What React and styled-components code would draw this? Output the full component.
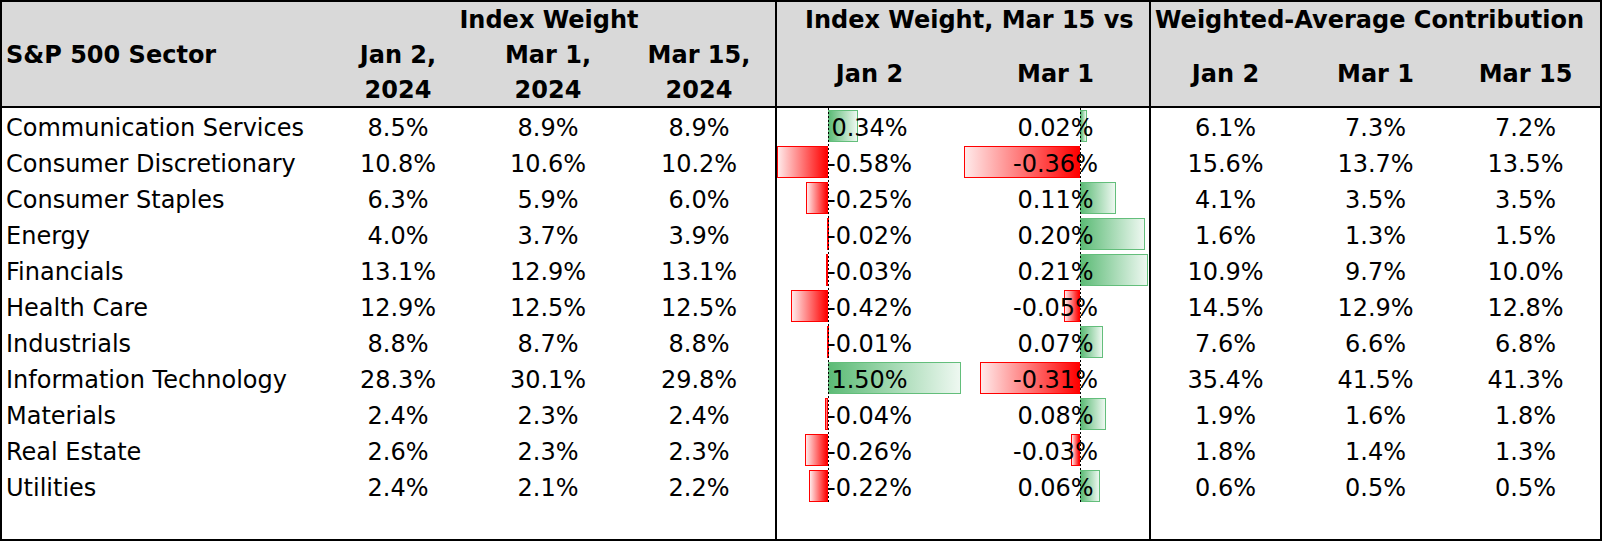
import React from "react"
import styled, { createGlobalStyle } from "styled-components"

const COLS = "321px 150px 150px 152px 187px 187px 151px 151px 149px"

const rows = [
  ["Communication Services", "8.5%", "8.9%", "8.9%", 0.34, 0.02, "6.1%", "7.3%", "7.2%"],
  ["Consumer Discretionary", "10.8%", "10.6%", "10.2%", -0.58, -0.36, "15.6%", "13.7%", "13.5%"],
  ["Consumer Staples", "6.3%", "5.9%", "6.0%", -0.25, 0.11, "4.1%", "3.5%", "3.5%"],
  ["Energy", "4.0%", "3.7%", "3.9%", -0.02, 0.2, "1.6%", "1.3%", "1.5%"],
  ["Financials", "13.1%", "12.9%", "13.1%", -0.03, 0.21, "10.9%", "9.7%", "10.0%"],
  ["Health Care", "12.9%", "12.5%", "12.5%", -0.42, -0.05, "14.5%", "12.9%", "12.8%"],
  ["Industrials", "8.8%", "8.7%", "8.8%", -0.01, 0.07, "7.6%", "6.6%", "6.8%"],
  ["Information Technology", "28.3%", "30.1%", "29.8%", 1.5, -0.31, "35.4%", "41.5%", "41.3%"],
  ["Materials", "2.4%", "2.3%", "2.4%", -0.04, 0.08, "1.9%", "1.6%", "1.8%"],
  ["Real Estate", "2.6%", "2.3%", "2.3%", -0.26, -0.03, "1.8%", "1.4%", "1.3%"],
  ["Utilities", "2.4%", "2.1%", "2.2%", -0.22, 0.06, "0.6%", "0.5%", "0.5%"],
]

// data bar scales: bar area is 184px wide inside the cell
const scales = [
  { min: -0.58, max: 1.5, offset: 0 },
  { min: -0.36, max: 0.21, offset: 2 },
]
const BAR_W = 184

const GlobalStyle = createGlobalStyle`
  body {
    margin: 0;
    background: #fff;
    font-family: "DejaVu Sans", sans-serif;
    color: #000;
  }
`

const Frame = styled.div`
  width: 1602px;
  height: 541px;
  box-sizing: border-box;
  border: 2px solid #000;
  display: flex;
  flex-direction: column;
  font-size: 24px;
`

const Head = styled.div`
  display: grid;
  grid-template-columns: ${COLS};
  grid-template-rows: 35px 36px 33px;
  background: #d9d9d9;
  border-bottom: 2px solid #000;
  font-weight: bold;
`

const HeadCell = styled.div`
  grid-column: ${(p) => p.$col};
  grid-row: ${(p) => p.$row};
  display: flex;
  align-items: center;
  justify-content: ${(p) => p.$align || "center"};
  padding-left: ${(p) => p.$pad || 0}px;
  padding-top: ${(p) => p.$top || 0}px;
  border-left: ${(p) => (p.$divider ? "2px solid #000" : "none")};
  white-space: nowrap;
`

const Row = styled.div`
  display: grid;
  grid-template-columns: ${COLS};
  height: ${(p) => p.$h || 36}px;
  flex: ${(p) => (p.$fill ? 1 : "none")};
`

const Cell = styled.div`
  display: flex;
  align-items: center;
  justify-content: ${(p) => p.$align || "center"};
  padding-left: ${(p) => p.$pad || 0}px;
  padding-top: 3px;
  box-sizing: border-box;
  border-left: ${(p) => (p.$divider ? "2px solid #000" : "none")};
  white-space: nowrap;
`

const BarCell = styled(Cell)`
  position: relative;
`

const Bar = styled.div`
  position: absolute;
  top: 2px;
  height: 32px;
  box-sizing: border-box;
  border: 1px solid ${(p) => (p.$neg ? "#ff0000" : "#63be7b")};
  background: ${(p) =>
    p.$neg
      ? "linear-gradient(to right, #ffeaea, #ff0000)"
      : "linear-gradient(to right, #5cbb76, #eef8f1)"};
`

const Axis = styled.div`
  position: absolute;
  top: 0;
  bottom: 0;
  width: 1px;
  background: repeating-linear-gradient(to bottom, #000 0 2px, transparent 2px 4px);
  z-index: 1;
`

const Value = styled.span`
  position: relative;
  z-index: 2;
`

function DataBar({ value, scale, divider }) {
  const per = BAR_W / (scale.max - scale.min)
  const axis = scale.offset + -scale.min * per
  const w = Math.abs(value) * per
  const left = value < 0 ? axis - w : axis
  return (
    <BarCell $divider={divider}>
      <Bar $neg={value < 0} style={{ left, width: Math.max(w, 1) }} />
      <Axis style={{ left: Math.round(axis) }} />
      <Value>{value.toFixed(2)}%</Value>
    </BarCell>
  )
}

export default function App() {
  return (
    <>
      <GlobalStyle />
      <Frame>
        <Head>
          <HeadCell $col="2 / 5" $row="1">Index Weight</HeadCell>
          <HeadCell $col="5 / 7" $row="1" $align="flex-start" $pad={28} $divider>
            Index Weight, Mar 15 vs
          </HeadCell>
          <HeadCell $col="7 / 10" $row="1" $align="flex-start" $pad={4} $divider>
            Weighted-Average Contribution
          </HeadCell>

          <HeadCell $col="1" $row="2" $align="flex-start" $pad={4}>S&amp;P 500 Sector</HeadCell>
          <HeadCell $col="2" $row="2">Jan 2,</HeadCell>
          <HeadCell $col="3" $row="2">Mar 1,</HeadCell>
          <HeadCell $col="4" $row="2">Mar 15,</HeadCell>
          <HeadCell $col="2" $row="3">2024</HeadCell>
          <HeadCell $col="3" $row="3">2024</HeadCell>
          <HeadCell $col="4" $row="3">2024</HeadCell>

          <HeadCell $col="5" $row="2 / 4" $top={4} $divider>Jan 2</HeadCell>
          <HeadCell $col="6" $row="2 / 4" $top={4}>Mar 1</HeadCell>
          <HeadCell $col="7" $row="2 / 4" $top={4} $divider>Jan 2</HeadCell>
          <HeadCell $col="8" $row="2 / 4" $top={4}>Mar 1</HeadCell>
          <HeadCell $col="9" $row="2 / 4" $top={4}>Mar 15</HeadCell>
        </Head>

        {rows.map((r) => (
          <Row key={r[0]}>
            <Cell $align="flex-start" $pad={4}>{r[0]}</Cell>
            <Cell>{r[1]}</Cell>
            <Cell>{r[2]}</Cell>
            <Cell>{r[3]}</Cell>
            <DataBar value={r[4]} scale={scales[0]} divider />
            <DataBar value={r[5]} scale={scales[1]} />
            <Cell $divider>{r[6]}</Cell>
            <Cell>{r[7]}</Cell>
            <Cell>{r[8]}</Cell>
          </Row>
        ))}

        <Row $fill>
          <Cell />
          <Cell />
          <Cell />
          <Cell />
          <Cell $divider />
          <Cell />
          <Cell $divider />
          <Cell />
          <Cell />
        </Row>
      </Frame>
    </>
  )
}
